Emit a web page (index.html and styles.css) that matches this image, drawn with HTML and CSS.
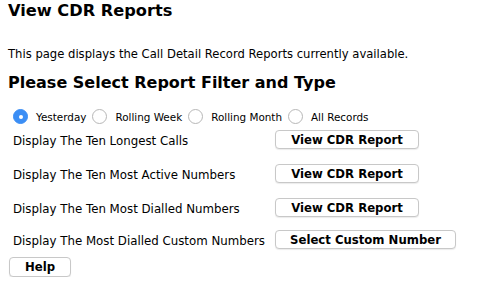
FILE: index.html
```html
<!DOCTYPE html>
<html>
<head>
<meta charset="utf-8">
<link rel="stylesheet" href="styles.css">
</head>
<body>
<h1 class="title">View CDR Reports</h1>
<p class="intro">This page displays the Call Detail Record Reports currently available.</p>
<h2 class="subtitle">Please Select Report Filter and Type</h2>
<div class="radios">
  <label class="radio"><span class="dot checked"></span>Yesterday</label>
  <label class="radio"><span class="dot"></span>Rolling Week</label>
  <label class="radio"><span class="dot"></span>Rolling Month</label>
  <label class="radio"><span class="dot"></span>All Records</label>
</div>
<div class="rows">
  <div class="row"><span class="label">Display The Ten Longest Calls</span><button class="btn">View CDR Report</button></div>
  <div class="row"><span class="label">Display The Ten Most Active Numbers</span><button class="btn">View CDR Report</button></div>
  <div class="row"><span class="label">Display The Ten Most Dialled Numbers</span><button class="btn">View CDR Report</button></div>
  <div class="row last"><span class="label">Display The Most Dialled Custom Numbers</span><button class="btn wide">Select Custom Number</button></div>
</div>
<button class="btn help">Help</button>
</body>
</html>
```
FILE: styles.css
```css
html, body { margin: 0; padding: 0; background: #fff; }
body {
  font-family: "DejaVu Sans", Verdana, sans-serif;
  color: #000;
  padding: 0 8px;
}
.title {
  font-size: 16.2px;
  font-weight: bold;
  margin: 0;
  padding-top: 1px;
  height: 46px;
}
.intro {
  font-size: 11.6px;
  margin: 0;
  height: 26px;
  line-height: 14px;
}
.subtitle {
  font-size: 16px;
  margin: 0;
  height: 31px;
}
.radios {
  display: flex;
  align-items: flex-start;
  box-sizing: border-box;
  padding-left: 5px;
  padding-top: 5px;
  height: 20px;
  font-size: 10.4px;
}
.radio { display: flex; align-items: center; margin-right: 6px; height: 15px; }
.dot {
  width: 15px; height: 15px;
  border: 1px solid #b7b7b7;
  border-radius: 50%;
  box-sizing: border-box;
  margin-right: 8px;
  background: #fff;
  flex: none;
}
.dot.checked {
  background: #3b8ef5;
  border-color: #3b8ef5;
  position: relative;
}
.dot.checked::after {
  content: "";
  position: absolute;
  left: 4.5px; top: 4.5px;
  width: 4px; height: 4px;
  border-radius: 50%;
  background: #fff;
}
.rows { padding-left: 5px; }
.row {
  display: flex;
  align-items: center;
  height: 34px;
  font-size: 11.8px;
}
.row.last { height: 30px; }
.label { width: 262px; }
.row .btn { margin-bottom: 3px; }
.btn {
  font-family: "DejaVu Sans", Verdana, sans-serif;
  font-size: 11.7px;
  font-weight: bold;
  background: #fff;
  border: 1px solid #c8c8c8;
  border-radius: 4px;
  height: 19px;
  width: 144px;
  padding: 0;
  color: #000;
  box-shadow: 0 1px 1px rgba(0,0,0,0.08);
}
.btn.wide { width: 181px; }
.btn.help { width: 62px; height: 20px; margin-left: 1px; }
```
